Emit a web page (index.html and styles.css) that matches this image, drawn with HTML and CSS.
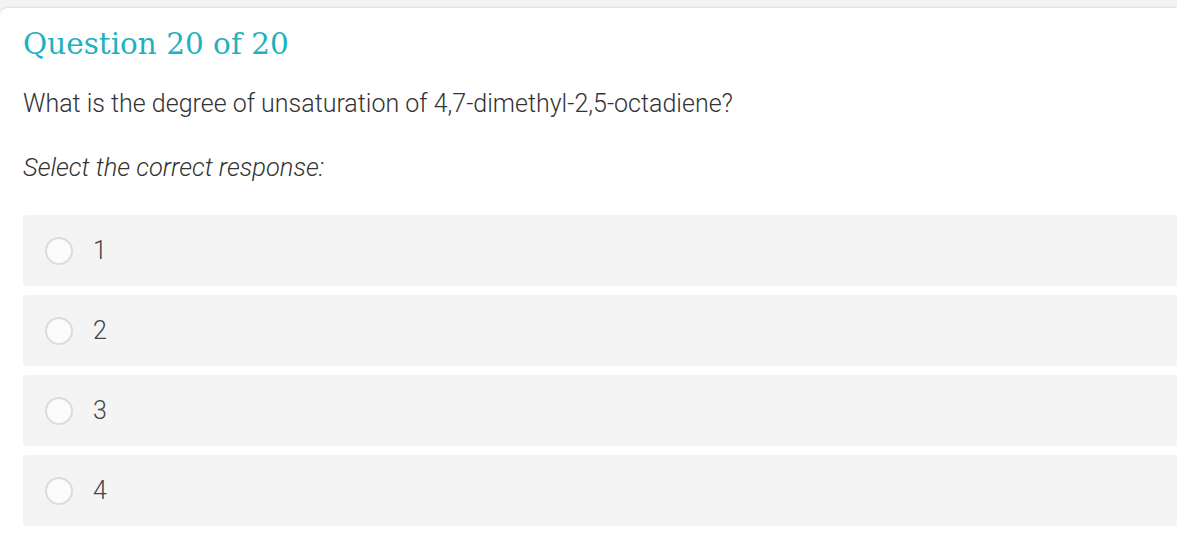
FILE: index.html
```html
<!DOCTYPE html>
<html lang="en">
<head>
    <meta charset="UTF-8">
    <meta name="viewport" content="width=device-width, initial-scale=1.0">
    <title>Question 20 of 20</title>
    <link rel="stylesheet" href="styles.css">
</head>
<body>
    <div class="card">
        <h2 class="question-title">Question 20 of 20</h2>
        <p class="question-text">What is the degree of unsaturation of 4,7-dimethyl-2,5-octadiene?</p>
        <p class="prompt">Select the correct response:</p>
        <div class="options">
            <label class="option"><span class="radio"></span><span class="option-text">1</span></label>
            <label class="option"><span class="radio"></span><span class="option-text">2</span></label>
            <label class="option"><span class="radio"></span><span class="option-text">3</span></label>
            <label class="option"><span class="radio"></span><span class="option-text">4</span></label>
        </div>
    </div>
</body>
</html>
```

FILE: styles.css
```css
body {
    margin: 0;
    background-color: #f2f2f2;
    font-family: Roboto, "Noto Sans", sans-serif;
    overflow: hidden;
}
.card {
    margin-top: 8px;
    height: 544px;
    box-sizing: border-box;
    background-color: #fff;
    border-radius: 8px 0 0 0;
    box-shadow: 0 -1px 2px rgba(0, 0, 0, 0.08);
    padding: 16px 0 0 23px;
}
.question-title {
    margin: 0;
    font-family: "DejaVu Serif", serif;
    font-weight: normal;
    font-size: 29.5px;
    line-height: 40px;
    color: #1fb1bf;
}
.question-text {
    margin: 25px 0 0 0;
    font-size: 25px;
    font-weight: 300;
    line-height: 30px;
    color: #333;
}
.prompt {
    margin: 33px 0 0 0;
    font-size: 25.5px;
    font-weight: 300;
    font-style: italic;
    line-height: 30px;
    color: #333;
}
.options {
    margin-top: 33px;
    display: flex;
    flex-direction: column;
    gap: 9px;
}
.option {
    display: flex;
    align-items: center;
    height: 71px;
    background-color: #f4f4f4;
    border-radius: 3px 0 0 3px;
    padding-left: 22px;
    cursor: pointer;
}
.radio {
    width: 24px;
    height: 24px;
    border: 2px solid #dcdcdc;
    border-radius: 50%;
    background-color: #fbfbfb;
}
.option-text {
    margin-left: 20px;
    font-size: 25px;
    font-weight: 300;
    color: #444;
}
```
